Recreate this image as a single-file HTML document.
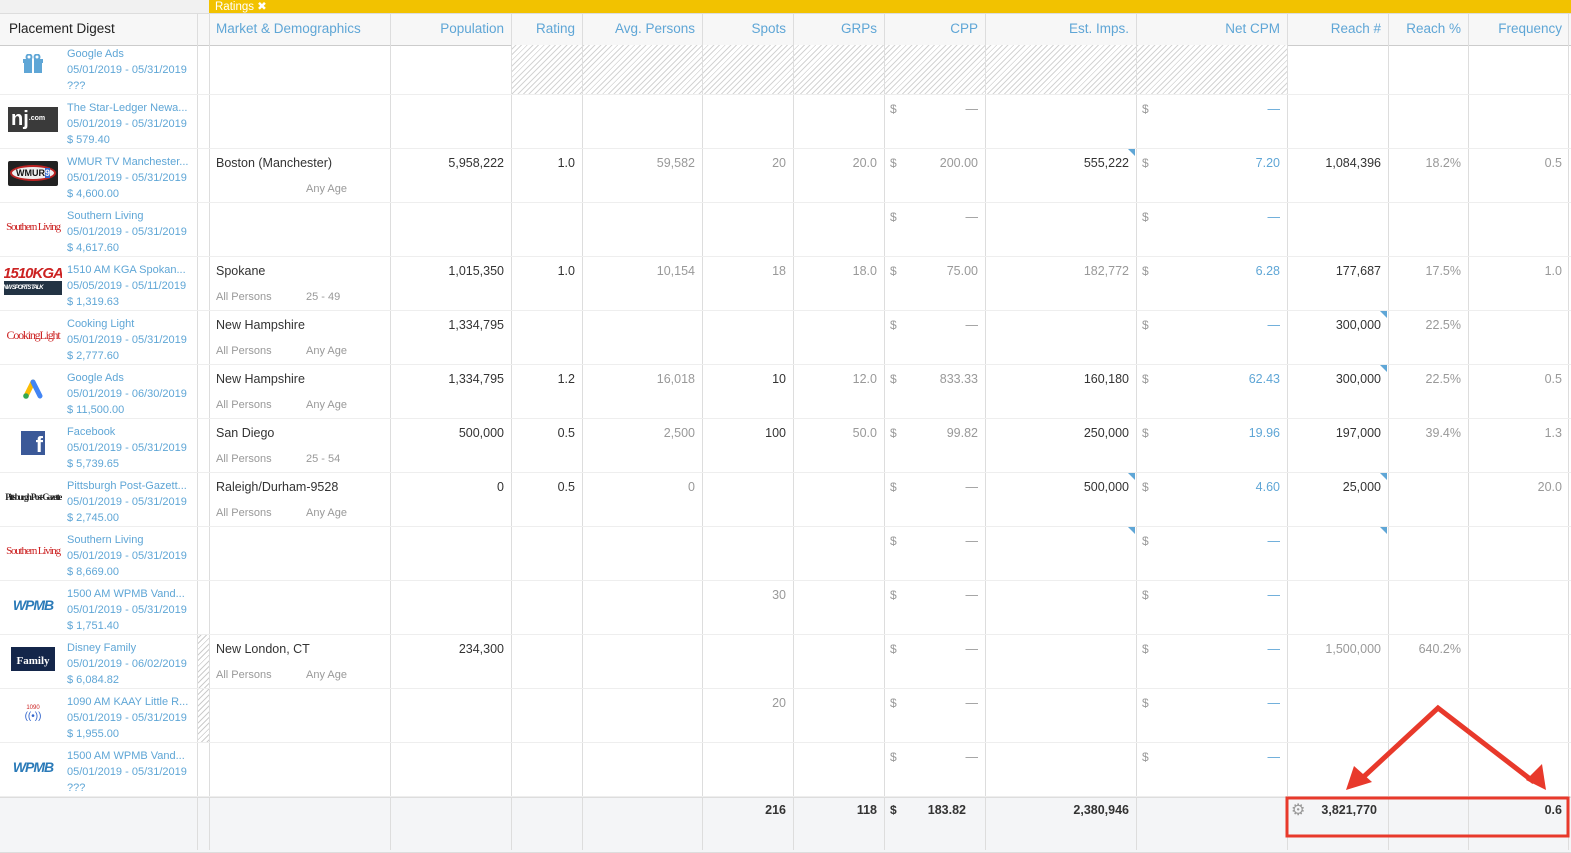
<!DOCTYPE html><html><head><meta charset="utf-8"><style>
body{margin:0;width:1571px;height:853px;overflow:hidden;background:#fff;font-family:"Liberation Sans",Arial,sans-serif;position:relative}
.a{position:absolute;white-space:nowrap}
.vl{position:absolute;width:1px;background:#ddd}
.hl{position:absolute;height:1px;background:#eee}
.h{font-size:13.5px;color:#5fa6d6;top:21px}
.v{font-size:12.5px;text-align:right}
.b{color:#333}.g{color:#999}.bl{color:#5fa6d6}
.p{font-size:11px;color:#5fa6d6;line-height:16px}
.s{font-size:11px;color:#999}
.tri{position:absolute;width:0;height:0;border-top:7px solid #5fa6d6;border-left:7px solid transparent}
</style></head><body>
<div class="a" style="left:0;top:0;width:1571px;height:13px;background:#f1f1f1"></div>
<div class="a" style="left:209px;top:0;width:1362px;height:13px;background:#f2c200"></div>
<div class="a" style="left:215px;top:-1px;font-size:11.5px;color:#fff">Ratings ✖</div>
<div class="a" style="left:0;top:13px;width:1571px;height:31px;background:#f7f7f7;border-top:1px solid #ddd;border-bottom:1px solid #ccc"></div>
<div class="a" style="left:0;top:796px;width:1571px;height:54px;background:#f4f5f7;border-top:2px solid #ddd;border-bottom:1px solid #ddd"></div>
<div class="a" style="left:511px;top:45px;width:776px;height:49px;background:repeating-linear-gradient(135deg,#fff 0 3px,#d4d4d4 3px 4px)"></div>
<div class="a" style="left:197px;top:634px;width:12px;height:108px;background:repeating-linear-gradient(135deg,#fff 0 3px,#ccc 3px 4px)"></div>
<div id="g"></div>
<svg class="a" style="left:1280px;top:700px" width="291" height="140">
<g fill="none" stroke="#e8392b" stroke-width="5"><polyline points="78,82 158,8 254,82"/></g>
<polygon points="66,90 74,66 92,82" fill="#e8392b"/><polygon points="266,90 246,80 262,64" fill="#e8392b"/>
<rect x="7" y="98" width="281" height="38" fill="none" stroke="#e8392b" stroke-width="3"/></svg>
<script>
var X=[0,197,209,390,511,582,702,793,884,985,1136,1287,1388,1468,1568];
var h='';
X.forEach(function(x,i){if(i>0)h+='<div class="vl" style="left:'+x+'px;top:13px;height:837px"></div>'});
var H=[['Placement Digest',9,'l','#222'],['Market & Demographics',216,'l'],['Population',504],['Rating',575],['Avg. Persons',695],['Spots',786],['GRPs',877],['CPP',978],['Est. Imps.',1129],['Net CPM',1280],['Reach #',1381],['Reach %',1461],['Frequency',1562]];
H.forEach(function(c){h+= c[2]=='l'?'<div class="a h" style="left:'+c[1]+'px;'+(c[3]?'color:'+c[3]:'')+'">'+c[0]+'</div>':'<div class="a h" style="right:'+(1571-c[1])+'px">'+c[0]+'</div>'});
var R=[
['gift','Google Ads','05/01/2019 - 05/31/2019','???'],
['nj','The Star-Ledger Newa...','05/01/2019 - 05/31/2019','$ 579.40','','','','','','','','','—','','—'],
['wmur','WMUR TV Manchester...','05/01/2019 - 05/31/2019','$ 4,600.00','Boston (Manchester)','','Any Age','5,958,222','1.0','59,582','20g','20.0','200.00','555,222t','7.20','1,084,396','18.2%','0.5'],
['sl','Southern Living','05/01/2019 - 05/31/2019','$ 4,617.60','','','','','','','','','—','','—'],
['kga','1510 AM KGA Spokan...','05/05/2019 - 05/11/2019','$ 1,319.63','Spokane','All Persons','25 - 49','1,015,350','1.0','10,154','18g','18.0','75.00','182,772g','6.28','177,687','17.5%','1.0'],
['cl','Cooking Light','05/01/2019 - 05/31/2019','$ 2,777.60','New Hampshire','All Persons','Any Age','1,334,795','','','','','—','','—','300,000t','22.5%'],
['ga','Google Ads','05/01/2019 - 06/30/2019','$ 11,500.00','New Hampshire','All Persons','Any Age','1,334,795','1.2','16,018','10','12.0','833.33','160,180','62.43','300,000t','22.5%','0.5'],
['fb','Facebook','05/01/2019 - 05/31/2019','$ 5,739.65','San Diego','All Persons','25 - 54','500,000','0.5','2,500','100','50.0','99.82','250,000','19.96','197,000','39.4%','1.3'],
['pg','Pittsburgh Post-Gazett...','05/01/2019 - 05/31/2019','$ 2,745.00','Raleigh/Durham-9528','All Persons','Any Age','0','0.5','0','','','—','500,000t','4.60','25,000t','','20.0'],
['sl','Southern Living','05/01/2019 - 05/31/2019','$ 8,669.00','','','','','','','','','—','t','—','t'],
['wp','1500 AM WPMB Vand...','05/01/2019 - 05/31/2019','$ 1,751.40','','','','','','','30g','','—','','—'],
['df','Disney Family','05/01/2019 - 06/02/2019','$ 6,084.82','New London, CT','All Persons','Any Age','234,300','','','','','—','','—','1,500,000g','640.2%'],
['kaay','1090 AM KAAY Little R...','05/01/2019 - 05/31/2019','$ 1,955.00','','','','','','','20g','','—','','—'],
['wp','1500 AM WPMB Vand...','05/01/2019 - 05/31/2019','???','','','','','','','','','—','','—']];
function logo(t){var s={gift:'<svg width="22" height="20"><rect x="2" y="7" width="18" height="12" fill="#5fa6d6"/><rect x="1" y="5" width="20" height="4" fill="#5fa6d6"/><rect x="10" y="5" width="2" height="14" fill="#fff"/><circle cx="7" cy="3" r="2.5" fill="none" stroke="#5fa6d6" stroke-width="2"/><circle cx="15" cy="3" r="2.5" fill="none" stroke="#5fa6d6" stroke-width="2"/></svg>',
nj:'<div style="width:47px;height:25px;background:#3a3a3a;color:#fff;font:bold 20px Liberation Sans;line-height:24px;padding-left:3px">nj<span style="font-size:7px;vertical-align:top">.com</span></div>',
wmur:'<div style="width:50px;height:25px;background:#222;border-radius:2px;display:flex;align-items:center;justify-content:center"><div style="background:#eee;border:2px solid #b22;border-radius:50%;font:bold 9px Liberation Sans;padding:1px 4px;color:#111">WMUR<span style="color:#fff;background:#36c">9</span></div></div>',
sl:'<div style="font:11px Liberation Serif;color:#c22;letter-spacing:-1.2px">Southern Living</div>',
kga:'<div style="font:italic bold 15px Liberation Sans;color:#c22;letter-spacing:-1px;line-height:14px">1510KGA<div style="font-size:6px;background:#234;color:#fff">NW SPORTS TALK</div></div>',
cl:'<div style="font:12px Liberation Serif;color:#c22;letter-spacing:-1.2px">CookingLight</div>',
ga:'<svg width="22" height="22"><path d="M4 18 L11 4" stroke="#fbbc04" stroke-width="5" stroke-linecap="round"/><path d="M11 4 L18 18" stroke="#4285f4" stroke-width="5" stroke-linecap="round"/><circle cx="4" cy="18" r="2.8" fill="#34a853"/></svg>',
fb:'<div style="width:24px;height:24px;background:#3b5998;color:#fff;font:bold 22px Liberation Sans;text-align:right;line-height:28px;padding-right:2px;box-sizing:border-box">f</div>',
pg:'<div style="font:bold 9px Liberation Serif;color:#222;letter-spacing:-1.6px">Pittsburgh Post-Gazette</div>',
wp:'<div style="font:bold italic 14px Liberation Sans;color:#2a7ab8;letter-spacing:-1px">WPMB</div>',
df:'<div style="width:44px;height:24px;background:#14264a;color:#fff;font:bold 11px Liberation Serif;text-align:center;line-height:28px">Family</div>',
kaay:'<div style="font:6px Liberation Sans;color:#c22;text-align:center;width:30px">1090<div style="color:#36c;font-size:10px">((•))</div></div>'};return s[t]||''}
var cols=[[504],[575],[695],[786],[877],[978],[1129],[1280],[1381],[1461],[1562]];
var def=['b','b','g','b','g','g','b','bl','b','g','g'];
R.forEach(function(r,i){var y=i==0?44:94+(i-1)*54;var t=y+8;
 h+='<div class="hl" style="left:0;width:1571px;top:'+(y+(i==0?50:54))+'px"></div>';
 var lc=r[0]=='gift'?'left:22px':'left:4px';
 h+='<div class="a" style="'+lc+';top:'+(y+(i==0?5:10))+'px;width:58px;height:30px;overflow:hidden;display:flex;align-items:center;'+(r[0]=='gift'?'':'justify-content:center')+'">'+logo(r[0])+'</div>';
 h+='<div class="a p" style="left:67px;top:'+(y+(i==0?2:6))+'px">'+r[1]+'<br>'+r[2]+'<br>'+r[3]+'</div>';
 if(r[4])h+='<div class="a" style="left:216px;top:'+t+'px;font-size:12.5px;color:#333">'+r[4]+'</div>';
 if(r[5])h+='<div class="a s" style="left:216px;top:'+(t+27)+'px">'+r[5]+'</div>';
 if(r[6])h+='<div class="a s" style="left:306px;top:'+(t+27)+'px">'+r[6]+'</div>';
 if(i>0&&r.length>12){h+='<div class="a g" style="left:890px;top:'+t+'px;font-size:12px">$</div><div class="a g" style="left:1142px;top:'+t+'px;font-size:12px">$</div>';}
 for(var k=0;k<11;k++){var v=r[7+k];if(v===undefined||v==='')continue;var c=def[k];
  if(v.slice(-1)=='t'){h+='<div class="tri" style="left:'+(cols[k][0]-1)+'px;top:'+(y+1)+'px"></div>';v=v.slice(0,-1);}
  if(v.slice(-1)=='g'){c='g';v=v.slice(0,-1);}
  if(v=='—')c=(k==7?'bl':'g');
  if(v)h+='<div class="a v '+c+'" style="right:'+(1571-cols[k][0])+'px;top:'+t+'px">'+v+'</div>';}
});
var f=[['216',786],['118',877],['183.82',966],['2,380,946',1129],['3,821,770',1377],['0.6',1562]];
f.forEach(function(c){h+='<div class="a v" style="right:'+(1571-c[1])+'px;top:803px;font-weight:bold;color:#333">'+c[0]+'</div>'});
h+='<div class="a" style="left:890px;top:803px;font-size:12px;font-weight:bold;color:#333">$</div>';
h+='<div class="a" style="left:1291px;top:800px;font-size:16px;color:#999">⚙</div>';
document.getElementById('g').innerHTML=h;
</script>
</body></html>
